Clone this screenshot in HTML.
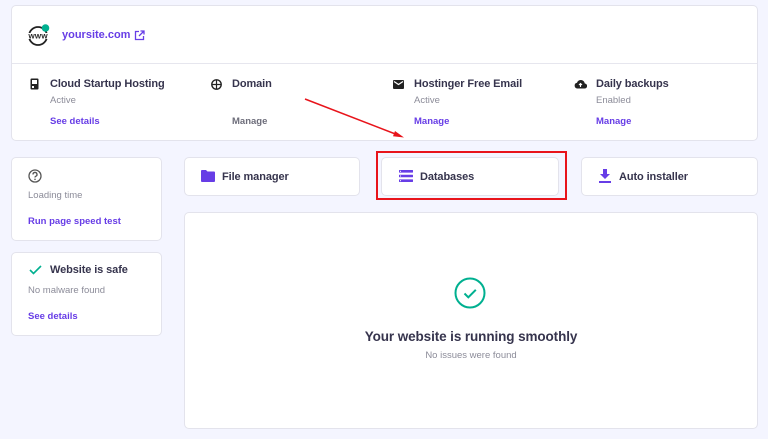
<!DOCTYPE html>
<html><head><style>
*{margin:0;padding:0;box-sizing:border-box}
body{width:768px;height:439px;background:#f4f5ff;font-family:"Liberation Sans",sans-serif;position:relative;overflow:hidden;color:#2f1c6a}
.c{position:absolute;background:#fff;border:1px solid #e3e3ec;border-radius:5px}
.t{position:absolute;font-size:11px;font-weight:bold;color:#36344d;white-space:nowrap;letter-spacing:-0.1px}
.s{position:absolute;font-size:9.5px;color:#8c8c99;white-space:nowrap}
.l{position:absolute;font-size:9.5px;font-weight:bold;color:#673de6;white-space:nowrap}
.g{position:absolute;font-size:9.5px;font-weight:bold;color:#6d6d7a;white-space:nowrap}
svg{position:absolute}
</style></head><body>
<div class="c" style="left:11px;top:5px;width:747px;height:136px"></div>
<div style="position:absolute;left:12px;top:63px;width:745px;height:1px;background:#e6e6ee"></div>
<svg style="left:27px;top:24px" width="24" height="22" viewBox="0 0 24 22"><circle cx="11" cy="12" r="9" fill="none" stroke="#222" stroke-width="1.8"/><rect x="0" y="9" width="22" height="6" fill="#fff"/><text x="11" y="14.5" font-size="6.8" font-weight="bold" text-anchor="middle" fill="#222" font-family="Liberation Sans">WWW</text><circle cx="18.5" cy="4" r="3.8" fill="#00b090"/></svg>
<div class="l" style="left:62px;top:29px;font-size:11px">yoursite.com</div>
<svg style="left:134px;top:30px" width="11" height="11" viewBox="0 0 11 11" fill="none" stroke="#673de6" stroke-width="1.3"><path d="M5 1.5H1.5v8h8V6"/><path d="M6.5 1h3.5v3.5M10 1L5 6"/></svg>

<svg style="left:30px;top:78px" width="9" height="12" viewBox="0 0 9 12"><rect x="0.5" y="0.5" width="8" height="11" rx="1" fill="#222"/><rect x="2" y="2" width="5" height="4" fill="#fff"/><rect x="2" y="8" width="2" height="2" fill="#fff"/></svg>
<div class="t" style="left:50px;top:78px">Cloud Startup Hosting</div>
<div class="s" style="left:50px;top:95px">Active</div>
<div class="l" style="left:50px;top:116px">See details</div>

<svg style="left:211px;top:79px" width="11" height="11" viewBox="0 0 11 11"><circle cx="5.5" cy="5.5" r="4.7" fill="none" stroke="#222" stroke-width="1.4"/><path d="M1 5.5h9M5.5 1v9" stroke="#222" stroke-width="1.2"/></svg>
<div class="t" style="left:232px;top:78px">Domain</div>
<div class="g" style="left:232px;top:116px">Manage</div>

<svg style="left:393px;top:80px" width="11" height="9" viewBox="0 0 11 9"><rect width="11" height="9" rx="1" fill="#222"/><path d="M1 1.5l4.5 3 4.5-3" stroke="#fff" stroke-width="1.2" fill="none"/></svg>
<div class="t" style="left:414px;top:78px">Hostinger Free Email</div>
<div class="s" style="left:414px;top:95px">Active</div>
<div class="l" style="left:414px;top:116px">Manage</div>

<svg style="left:574px;top:79px" width="13" height="10" viewBox="0 0 13 10"><path d="M3 9.5h7.5a2.5 2.5 0 0 0 .3-5A4 4 0 0 0 3 3.8 2.9 2.9 0 0 0 3 9.5z" fill="#222"/><path d="M6.5 8V4.5M5 6l1.5-1.5L8 6" stroke="#fff" stroke-width="1.1" fill="none"/></svg>
<div class="t" style="left:596px;top:78px">Daily backups</div>
<div class="s" style="left:596px;top:95px">Enabled</div>
<div class="l" style="left:596px;top:116px">Manage</div>

<div class="c" style="left:11px;top:157px;width:151px;height:84px"></div>
<svg style="left:28px;top:169px" width="14" height="14" viewBox="0 0 14 14"><circle cx="7" cy="7" r="6" fill="none" stroke="#555" stroke-width="1.3"/><path d="M5 5.5a2 2 0 1 1 2.7 1.8c-.5.2-.7.6-.7 1.2" fill="none" stroke="#555" stroke-width="1.3"/><circle cx="7" cy="10.3" r=".8" fill="#555"/></svg>
<div class="s" style="left:28px;top:190px">Loading time</div>
<div class="l" style="left:28px;top:216px">Run page speed test</div>

<div class="c" style="left:11px;top:252px;width:151px;height:84px"></div>
<svg style="left:29px;top:265px" width="13" height="10" viewBox="0 0 13 10"><path d="M1 5l3.5 3.5L12 1" fill="none" stroke="#00b090" stroke-width="1.6"/></svg>
<div class="t" style="left:50px;top:264px">Website is safe</div>
<div class="s" style="left:28px;top:285px">No malware found</div>
<div class="l" style="left:28px;top:311px">See details</div>

<div class="c" style="left:184px;top:157px;width:176px;height:39px"></div>
<svg style="left:201px;top:170px" width="14" height="12" viewBox="0 0 14 12"><path d="M0 1a1 1 0 0 1 1-1h4l1.5 1.5H13a1 1 0 0 1 1 1V11a1 1 0 0 1-1 1H1a1 1 0 0 1-1-1z" fill="#673de6"/></svg>
<div class="t" style="left:222px;top:171px">File manager</div>

<div class="c" style="left:381px;top:157px;width:178px;height:39px"></div>
<svg style="left:399px;top:170px" width="14" height="12" viewBox="0 0 14 12" fill="#673de6"><rect y="0" width="14" height="2.6" rx=".5"/><rect y="4.7" width="14" height="2.6" rx=".5"/><rect y="9.4" width="14" height="2.6" rx=".5"/><g fill="#fff"><rect x="1" y=".8" width="1" height="1"/><rect x="1" y="5.5" width="1" height="1"/><rect x="1" y="10.2" width="1" height="1"/></g></svg>
<div class="t" style="left:420px;top:171px">Databases</div>
<div style="position:absolute;left:376px;top:151px;width:191px;height:49px;border:2px solid #e8141b"></div>

<div class="c" style="left:581px;top:157px;width:177px;height:39px"></div>
<svg style="left:599px;top:169px" width="12" height="14" viewBox="0 0 12 14" fill="#673de6"><path d="M4 0h4v5h3L6 10 1 5h3z"/><rect y="12" width="12" height="2"/></svg>
<div class="t" style="left:619px;top:171px">Auto installer</div>

<div class="c" style="left:184px;top:212px;width:574px;height:217px"></div>
<svg style="left:454px;top:277px" width="32" height="32" viewBox="0 0 32 32"><circle cx="16" cy="16" r="14.5" fill="none" stroke="#00b090" stroke-width="2"/><path d="M10.5 16.5l3.8 3.8 7.5-7.5" fill="none" stroke="#00b090" stroke-width="2"/></svg>
<div class="t" style="left:184px;width:574px;text-align:center;top:329px;font-size:13.5px">Your website is running smoothly</div>
<div class="s" style="left:184px;width:574px;text-align:center;top:350px">No issues were found</div>

<svg style="left:0;top:0" width="768" height="439"><line x1="305" y1="99" x2="398" y2="135" stroke="#e8141b" stroke-width="1.5"/><path d="M404 137.5l-9-6.5-2 5.2z" fill="#e8141b"/></svg>
</body></html>
